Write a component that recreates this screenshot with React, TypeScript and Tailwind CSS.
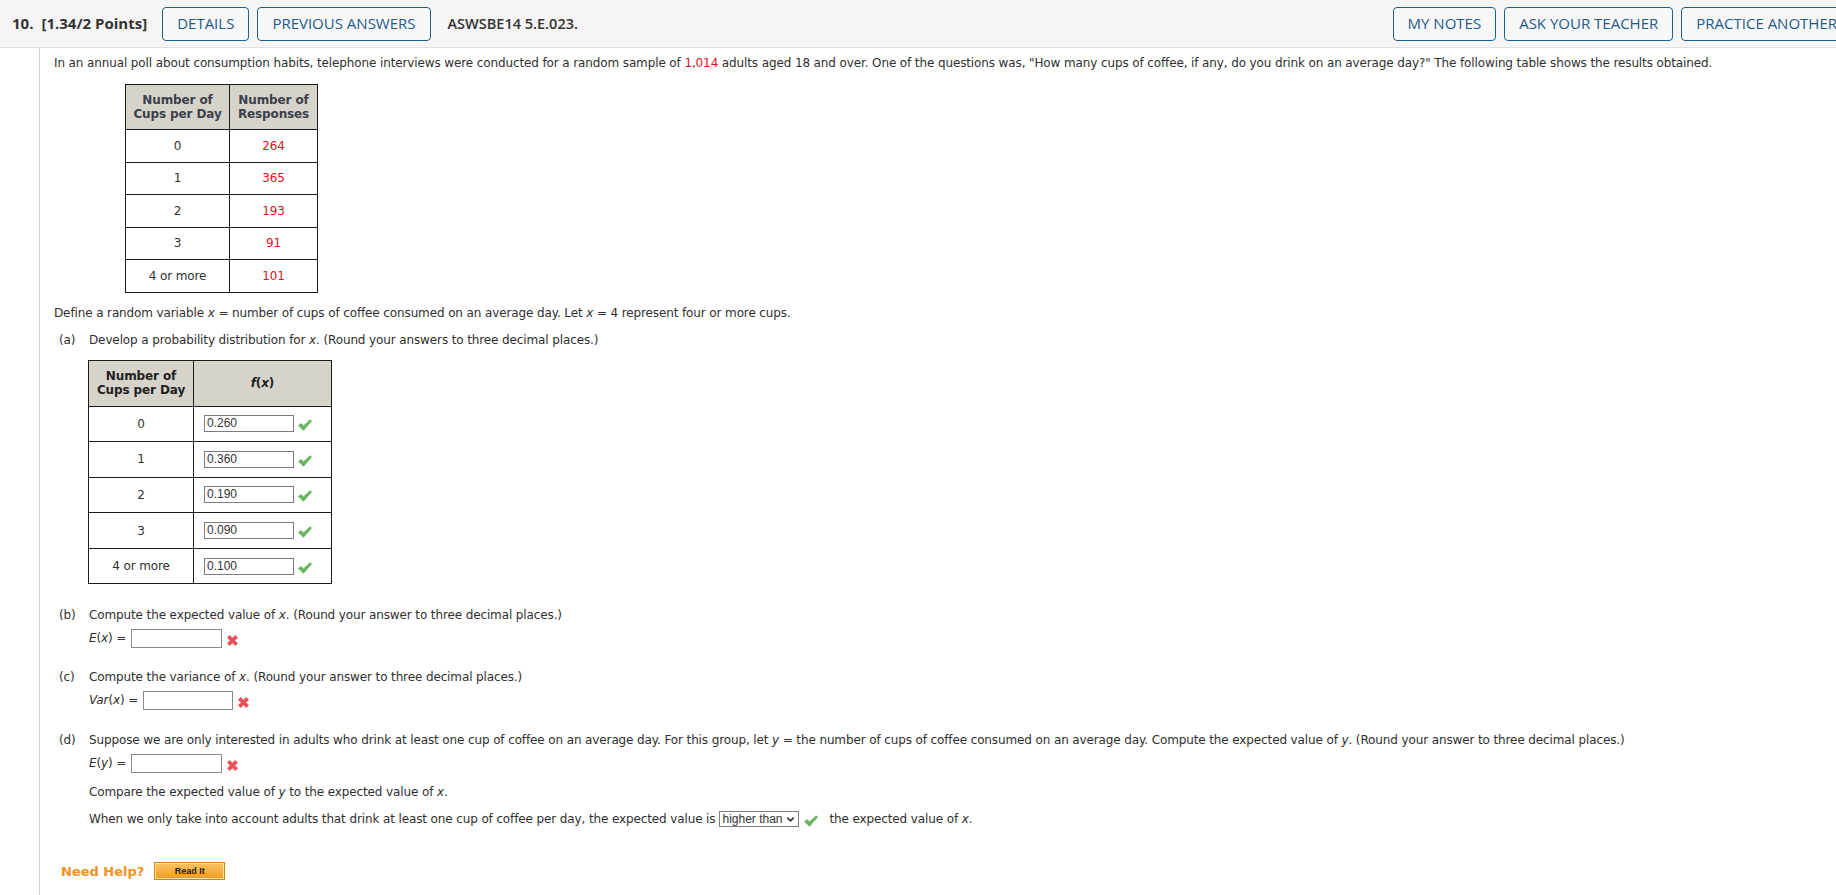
import { ChevronDown } from 'lucide-react'

const responses = [
  { cups: '0', count: '264' },
  { cups: '1', count: '365' },
  { cups: '2', count: '193' },
  { cups: '3', count: '91' },
  { cups: '4 or more', count: '101' },
]

const answers = [
  { cups: '0', fx: '0.260' },
  { cups: '1', fx: '0.360' },
  { cups: '2', fx: '0.190' },
  { cups: '3', fx: '0.090' },
  { cups: '4 or more', fx: '0.100' },
]

function Check({ className = '' }: { className?: string }) {
  return (
    <svg viewBox="0 0 14 12" className={`w-[14px] h-[12px] ${className}`}>
      <path d="M0.6 6.4 L3.1 4.5 L5.4 6.9 L12.2 0.7 L13.5 2.1 L5.5 11.3 Z" fill="#66b85c" stroke="#4e9c45" strokeWidth="0.6" strokeLinejoin="round" />
    </svg>
  )
}

function Cross() {
  return (
    <svg viewBox="0 0 12 12" className="w-[13px] h-[13px] ml-[4px] mt-[5px]">
      <path d="M1.2 3.4 L3.4 1.2 L6 3.8 L8.6 1.2 L10.8 3.4 L8.2 6 L10.8 8.6 L8.6 10.8 L6 8.2 L3.4 10.8 L1.2 8.6 L3.8 6 Z" fill="#ec4f58" stroke="#d9404a" strokeWidth="0.4" />
    </svg>
  )
}

function HeaderButton({ label }: { label: string }) {
  return (
    <button className="h-[34px] px-[14px] rounded-[4px] border border-[#1e5f91] bg-[#f7f7f7] text-[#1e5a8c] text-[15px] whitespace-nowrap">
      {label}
    </button>
  )
}

function AnswerBox({ width = 'w-[91px]' }: { width?: string }) {
  return <div className={`${width} h-[19px] border border-[#8a8a8a] bg-white`} />
}

export default function App() {
  return (
    <div className="w-[1836px] h-[895px] overflow-hidden bg-white text-[12px] tracking-[-0.12px] text-[#2f2f2f] font-['DejaVu_Sans',Verdana,sans-serif]">
      {/* question header */}
      <div className="w-[1852px] h-[48px] bg-[#f5f5f5] border-b border-[#e0e0e0] flex items-center pl-[12px] tracking-normal font-['Open_Sans',sans-serif]">
        <span className="text-[15px] font-bold text-[#333]">10.</span>
        <span className="ml-[8px] text-[15px] font-bold text-[#333]">[1.34/2 Points]</span>
        <div className="ml-[15px] flex items-center gap-[8px]">
          <HeaderButton label="DETAILS" />
          <HeaderButton label="PREVIOUS ANSWERS" />
        </div>
        <span className="ml-[17px] text-[14.5px] font-semibold text-[#333]">ASWSBE14 5.E.023.</span>
        <div className="ml-auto flex items-center gap-[8px]">
          <HeaderButton label="MY NOTES" />
          <HeaderButton label="ASK YOUR TEACHER" />
          <HeaderButton label="PRACTICE ANOTHER" />
        </div>
      </div>

      <div className="flex h-[847px]">
        <div className="w-[40px] border-r border-[#d4d4d4]" />
        <div className="pl-[14px] flex-1">
          <p className="mt-[7px] leading-[16px]">
            In an annual poll about consumption habits, telephone interviews were conducted for a random sample of{' '}
            <span className="text-[#e3101d]">1,014</span> adults aged 18 and over. One of the questions was, "How many cups of coffee, if any, do you drink on an average day?" The following table shows the results obtained.
          </p>

          {/* responses table */}
          <div className="mt-[13px] ml-[71px] w-[193px] border border-[#1a1a1a]">
            <div className="flex h-[44px] bg-[#d6d3ca] font-bold text-[#3a3f4a] leading-[14px] text-center">
              <div className="w-[104px] border-r border-[#1a1a1a] flex items-center justify-center">Number of<br />Cups per Day</div>
              <div className="flex-1 flex items-center justify-center">Number of<br />Responses</div>
            </div>
            {responses.map(r => (
              <div key={r.cups} className="flex h-[32.5px] border-t border-[#1a1a1a]">
                <div className="w-[104px] border-r border-[#1a1a1a] flex items-center justify-center">{r.cups}</div>
                <div className="flex-1 flex items-center justify-center text-[#e3101d]">{r.count}</div>
              </div>
            ))}
          </div>

          <p className="mt-[12px] leading-[16px]">
            Define a random variable <i>x</i> = number of cups of coffee consumed on an average day. Let <i>x</i> = 4 represent four or more cups.
          </p>

          <div className="mt-[11px] flex leading-[16px]">
            <span className="ml-[5px] w-[30px]">(a)</span>
            <span>Develop a probability distribution for <i>x</i>. (Round your answers to three decimal places.)</span>
          </div>

          {/* f(x) table */}
          <div className="mt-[12px] ml-[34px] w-[244px] border border-[#1a1a1a]">
            <div className="flex h-[45px] bg-[#d6d3ca] font-bold text-[#1f1f1f] leading-[14px] text-center">
              <div className="w-[105px] border-r border-[#1a1a1a] flex items-center justify-center">Number of<br />Cups per Day</div>
              <div className="flex-1 flex items-center justify-center"><i>f</i>(<i>x</i>)</div>
            </div>
            {answers.map(r => (
              <div key={r.cups} className="flex h-[35.6px] border-t border-[#1a1a1a]">
                <div className="w-[105px] border-r border-[#1a1a1a] flex items-center justify-center">{r.cups}</div>
                <div className="flex-1 flex items-center pl-[10px]">
                  <div className="w-[90px] h-[17px] border border-[#7c7c7c] bg-white text-[12px] leading-[15px] pl-[2px] tracking-normal font-['Liberation_Sans',Arial,sans-serif] text-[#333]">{r.fx}</div>
                  <Check className="ml-[4px] mt-[3px]" />
                </div>
              </div>
            ))}
          </div>

          <div className="mt-[23px] flex leading-[16px]">
            <span className="ml-[5px] w-[30px]">(b)</span>
            <span>Compute the expected value of <i>x</i>. (Round your answer to three decimal places.)</span>
          </div>
          <div className="mt-[5px] ml-[35px] flex items-center h-[20px]">
            <span className="mr-[5px]"><i>E</i>(<i>x</i>) =</span>
            <AnswerBox />
            <Cross />
          </div>

          <div className="mt-[21px] flex leading-[16px]">
            <span className="ml-[5px] w-[30px]">(c)</span>
            <span>Compute the variance of <i>x</i>. (Round your answer to three decimal places.)</span>
          </div>
          <div className="mt-[5px] ml-[35px] flex items-center h-[20px]">
            <span className="mr-[5px]"><i>Var</i>(<i>x</i>) =</span>
            <AnswerBox width="w-[90px]" />
            <Cross />
          </div>

          <div className="mt-[22px] flex leading-[16px]">
            <span className="ml-[5px] w-[30px]">(d)</span>
            <span>
              Suppose we are only interested in adults who drink at least one cup of coffee on an average day. For this group, let <i>y</i> = the number of cups of coffee consumed on an average day. Compute the expected value of <i>y</i>. (Round your answer to three decimal places.)
            </span>
          </div>
          <div className="mt-[5px] ml-[35px] flex items-center h-[20px]">
            <span className="mr-[5px]"><i>E</i>(<i>y</i>) =</span>
            <AnswerBox />
            <Cross />
          </div>

          <p className="mt-[11px] ml-[35px] leading-[16px]">
            Compare the expected value of <i>y</i> to the expected value of <i>x</i>.
          </p>

          <div className="mt-[10px] ml-[35px] flex items-center h-[18px]">
            <span>When we only take into account adults that drink at least one cup of coffee per day, the expected value is</span>
            <div className="ml-[4px] h-[16px] w-[80px] border border-[#7c7c7c] flex items-center justify-between px-[2px] text-[12px] tracking-normal text-[#333] font-['Liberation_Sans',Arial,sans-serif]">
              <span className="leading-[14px]">higher than</span>
              <ChevronDown className="w-[11px] h-[11px]" strokeWidth={3.5} />
            </div>
            <Check className="ml-[5px] mt-[4px]" />
            <span className="ml-[11px]">the expected value of <i>x</i>.</span>
          </div>

          <div className="mt-[34px] ml-[7px] flex items-center h-[18px]">
            <span className="text-[#f39020] font-bold text-[13px] tracking-normal">Need Help?</span>
            <button className="ml-[10px] w-[71px] h-[18px] border border-[#d6841a] bg-gradient-to-b from-[#fbc463] to-[#f29b16] shadow-[inset_0_0_0_1px_#fde3a7] text-[9px] font-bold text-[#222] tracking-normal font-['Liberation_Sans',Arial,sans-serif] leading-none">
              Read It
            </button>
          </div>
        </div>
      </div>
    </div>
  )
}
